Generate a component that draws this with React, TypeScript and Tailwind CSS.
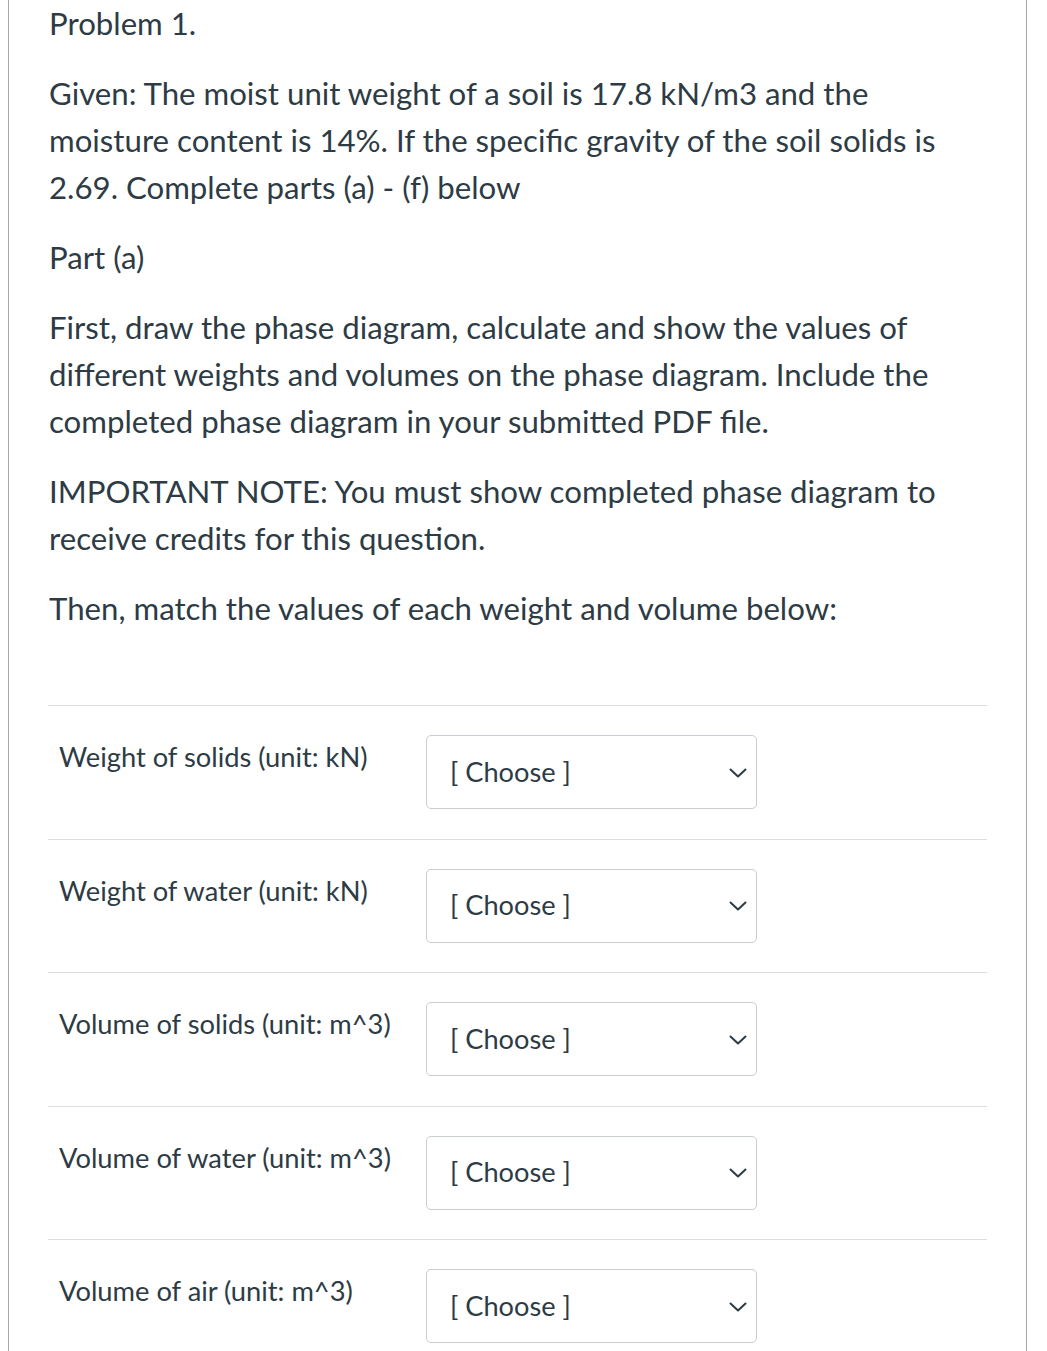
const rows = [
    'Weight of solids (unit: kN)',
    'Weight of water (unit: kN)',
    'Volume of solids (unit: m^3)',
    'Volume of water (unit: m^3)',
    'Volume of air (unit: m^3)',
];

function ChooseSelect() {
    return (
        <div className="flex h-[74px] w-[331px] items-center justify-between rounded-[5px] border border-[#c7cdd1] bg-white pl-[23px] pr-[9px]">
            <span className="-mt-[1px] text-[27.2px] leading-[34px] text-[#2d3b45]">[ Choose ]</span>
            <svg width="18" height="10" viewBox="0 0 18 10" fill="none" className="mt-[1px]">
                <path d="M1.5 1.5 L9 8.5 L16.5 1.5" stroke="#2d3b45" strokeWidth="2" strokeLinecap="round" strokeLinejoin="round" />
            </svg>
        </div>
    );
}

export default function App() {
    return (
        <div
            className="min-h-[1351px] bg-white text-[#2d3b45]"
            style={{ fontFamily: 'Lato, "Open Sans", sans-serif' }}
        >
            <div className="ml-2 min-h-[1351px] w-[1019px] border-x border-[#a8a8a8] pl-[40px] pr-[39px]">
                <div className="flex flex-col gap-[23px] text-[31.2px] leading-[47px]">
                    <p>Problem 1.</p>
                    <p>
                        Given: The moist unit weight of a soil is 17.8 kN/m3 and the moisture content is 14%. If the
                        specific gravity of the soil solids is 2.69. Complete parts (a) - (f) below
                    </p>
                    <p>Part (a)</p>
                    <p>
                        First, draw the phase diagram, calculate and show the values of different weights and
                        volumes on the phase diagram. Include the completed phase diagram in your submitted PDF file.
                    </p>
                    <p>
                        IMPORTANT NOTE: You must show completed phase diagram to receive credits for this question.
                    </p>
                    <p>Then, match the values of each weight and volume below:</p>
                </div>

                <div className="mt-[73px] -ml-px w-[939px] border-t border-[#dcdfe2]">
                    {rows.map((label) => (
                        <div key={label} className="flex border-b border-[#dcdfe2] py-[29.25px]">
                            <div className="-mt-[2px] w-[378px] pl-[11px] text-[27.3px] leading-[47px]">
                                {label}
                            </div>
                            <ChooseSelect />
                        </div>
                    ))}
                </div>
            </div>
        </div>
    );
}
